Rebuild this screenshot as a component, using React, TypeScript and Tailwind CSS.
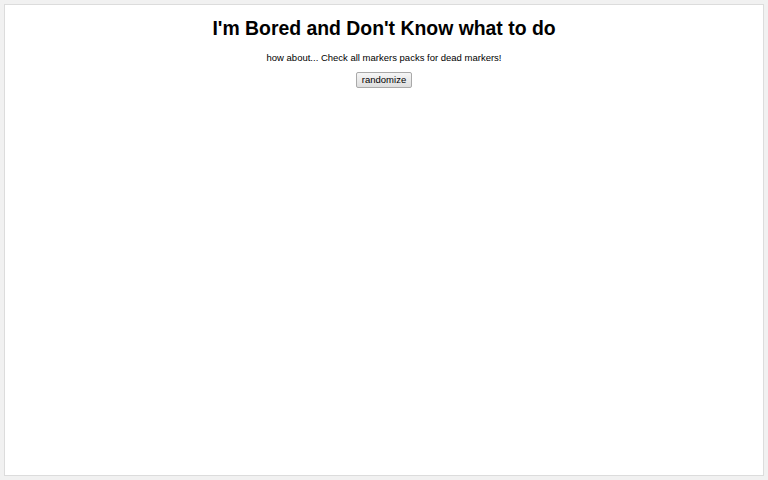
import React from "react";

export default function App() {
  return (
    <div className="w-[768px] h-[480px] bg-[#f1f1f1] p-[4px] font-['Liberation_Sans',Arial,sans-serif]">
      <div className="h-[472px] w-[760px] bg-white border border-[#dcdcdc] flex flex-col items-center">
        <h1 className="mt-[12px] text-[19.4px] leading-[22px] font-bold text-black">
          I'm Bored and Don't Know what to do
        </h1>
        <p className="mt-[13px] text-[9.5px] leading-[12px] text-black">
          how about... Check all markers packs for dead markers!
        </p>
        <button className="mt-[8px] h-[16px] w-[56px] text-[9.5px] leading-[12px] text-black border border-[#a9a9a9] rounded-[2px] bg-gradient-to-b from-[#f6f6f6] to-[#dedede]">
          randomize
        </button>
      </div>
    </div>
  );
}
